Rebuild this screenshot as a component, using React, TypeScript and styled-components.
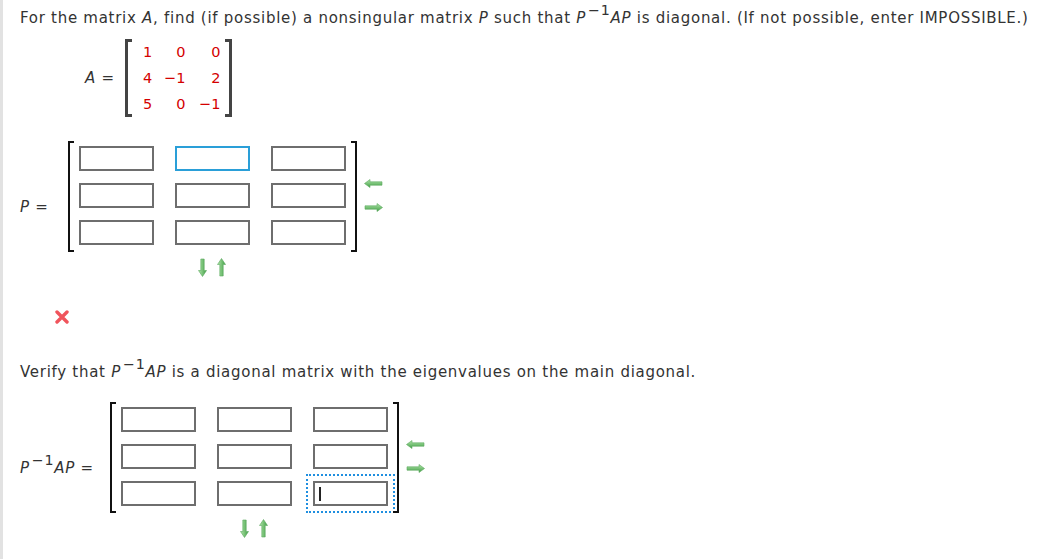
import React from 'react';
import styled, { createGlobalStyle } from 'styled-components';

const GlobalStyle = createGlobalStyle`
  html, body {
    margin: 0;
    padding: 0;
    background: #fff;
  }
`;

const Page = styled.div`
  box-sizing: border-box;
  min-height: 559px;
  border-left: 3px solid #e2e2e2;
  padding: 8px 0 0 17px;
  font-family: "DejaVu Sans", Verdana, sans-serif;
  font-size: 15px;
  letter-spacing: 0.72px;
  color: #333;
`;

const Para = styled.p<{ $top?: number }>`
  margin: ${p => p.$top ?? 0}px 0 0 0;
  line-height: 20px;
  white-space: nowrap;
`;

const Var = styled.i`
  font-style: italic;
`;

const Sup = styled.sup`
  font-size: 0.95em;
  vertical-align: 0.55em;
  line-height: 0;
  margin-left: 2px;
`;

const Row = styled.div<{ $indent?: number; $top?: number }>`
  display: flex;
  align-items: center;
  margin-left: ${p => p.$indent ?? 0}px;
  margin-top: ${p => p.$top ?? 0}px;
`;

const Label = styled.span<{ $width: number; $shift?: number }>`
  width: ${p => p.$width}px;
  flex: none;
  white-space: nowrap;
  position: relative;
  top: ${p => p.$shift ?? 0}px;
`;

/* given matrix A */
const GivenMatrix = styled.div`
  display: grid;
  grid-template-columns: 20px 23px 35px;
  grid-auto-rows: 26px;
  align-items: center;
  padding: 0 8px 0 15px;
  border-left: 3px solid #444;
  border-right: 3px solid #444;
  position: relative;
  font-size: 14.5px;
  letter-spacing: 0.5px;

  &::before,
  &::after {
    content: '';
    position: absolute;
    top: 0;
    bottom: 0;
    width: 4px;
    border-top: 3px solid #444;
    border-bottom: 3px solid #444;
  }
  &::before { left: 0; }
  &::after { right: 0; }
`;

const Entry = styled.span<{ $align?: string }>`
  color: #d40000;
  text-align: ${p => p.$align ?? 'right'};
`;

/* input matrices */
const Wrap = styled.div`
  display: flex;
  align-items: center;
`;

const Bracketed = styled.div`
  position: relative;
  padding: 5px 9px 7px 9px;
  border-left: 2px solid #111;
  border-right: 2px solid #111;

  &::before,
  &::after {
    content: '';
    position: absolute;
    top: 0;
    bottom: 0;
    width: 4px;
    border-top: 2px solid #111;
    border-bottom: 2px solid #111;
  }
  &::before { left: 0; }
  &::after { right: 0; }
`;

const Cells = styled.div`
  display: grid;
  grid-template-columns: repeat(3, 75px);
  column-gap: 21px;
  row-gap: 12px;
`;

const CellSlot = styled.div<{ $focus?: boolean }>`
  position: relative;
  width: 75px;
  height: 25px;

  ${p =>
    p.$focus &&
    `&::after {
      content: '';
      position: absolute;
      left: -7px;
      top: -7px;
      right: -7px;
      bottom: -7px;
      border: 2px dotted #1f8fe0;
    }`}
`;

const Cell = styled.div<{ $active?: boolean }>`
  box-sizing: border-box;
  width: 75px;
  height: 25px;
  border: 2px solid ${p => (p.$active ? '#2a9fd8' : '#6e6e6e')};
  background: #fff;
  position: relative;
`;

const Caret = styled.span`
  position: absolute;
  left: 4px;
  top: 4px;
  width: 2px;
  height: 14px;
  background: #222;
`;

const SideArrows = styled.div`
  display: flex;
  flex-direction: column;
  gap: 15px;
  margin-left: 7px;
  margin-top: -3px;
`;

const BottomArrows = styled.div<{ $left: number }>`
  display: flex;
  gap: 10px;
  margin: 6px 0 0 ${p => p.$left}px;
`;

const Block = styled.div`
  display: flex;
  flex-direction: column;
`;

const Feedback = styled.div`
  margin: 33px 0 0 35px;
  height: 14px;
`;

const Grad = () => (
  <defs>
    <linearGradient id="gh" x1="0" y1="0" x2="0" y2="1">
      <stop offset="0" stopColor="#b2e6aa" />
      <stop offset="1" stopColor="#3f9e45" />
    </linearGradient>
    <linearGradient id="gv" x1="0" y1="0" x2="1" y2="0">
      <stop offset="0" stopColor="#b2e6aa" />
      <stop offset="1" stopColor="#3f9e45" />
    </linearGradient>
  </defs>
);

const ArrowIcon = ({ dir }: { dir: 'left' | 'right' | 'up' | 'down' }) => {
  if (dir === 'left' || dir === 'right') {
    const d =
      dir === 'left'
        ? 'M0.5 4.5 L6 0.5 L6 2.8 L18 2.8 L18 6.2 L6 6.2 L6 8.5 Z'
        : 'M18.5 4.5 L13 0.5 L13 2.8 L1 2.8 L1 6.2 L13 6.2 L13 8.5 Z';
    return (
      <svg width="19" height="9" viewBox="0 0 19 9">
        <Grad />
        <path d={d} fill="url(#gh)" stroke="#5daa5f" strokeWidth="0.6" />
      </svg>
    );
  }
  const d =
    dir === 'down'
      ? 'M4.5 18.5 L0.5 12.5 L2.8 12.5 L2.8 1 L6.2 1 L6.2 12.5 L8.5 12.5 Z'
      : 'M4.5 0.5 L0.5 6.5 L2.8 6.5 L2.8 18 L6.2 18 L6.2 6.5 L8.5 6.5 Z';
  return (
    <svg width="9" height="19" viewBox="0 0 9 19">
      <Grad />
      <path d={d} fill="url(#gv)" stroke="#5daa5f" strokeWidth="0.6" />
    </svg>
  );
};

const CrossIcon = () => (
  <svg width="14" height="14" viewBox="0 0 14 14">
    <path d="M2 2 L12 12 M12 2 L2 12" stroke="#f0545c" strokeWidth="3.4" strokeLinecap="round" />
  </svg>
);

type Props = { active?: number; focus?: number };

const InputMatrix: React.FC<Props & { arrowsLeft: number }> = ({ active, focus, arrowsLeft }) => (
  <Block>
    <Wrap>
      <Bracketed>
        <Cells>
          {Array.from({ length: 9 }).map((_, i) => (
            <CellSlot key={i} $focus={focus === i}>
              <Cell $active={active === i}>{focus === i && <Caret />}</Cell>
            </CellSlot>
          ))}
        </Cells>
      </Bracketed>
      <SideArrows>
        <ArrowIcon dir="left" />
        <ArrowIcon dir="right" />
      </SideArrows>
    </Wrap>
    <BottomArrows $left={130}>
      <ArrowIcon dir="down" />
      <ArrowIcon dir="up" />
    </BottomArrows>
  </Block>
);

const A = [
  ['1', '0', '0'],
  ['4', '\u22121', '2'],
  ['5', '0', '\u22121'],
];

export default function App() {
  return (
    <>
      <GlobalStyle />
      <Page>
        <Para>
          For the matrix <Var>A</Var>, find (if possible) a nonsingular matrix <Var>P</Var> such that{' '}
          <Var>P</Var>
          <Sup>{'\u22121'}</Sup>
          <Var>AP</Var> is diagonal. (If not possible, enter IMPOSSIBLE.)
        </Para>

        <Row $indent={65} $top={11}>
          <Label $width={40}>
            <Var>A</Var> =
          </Label>
          <GivenMatrix>
            {A.flat().map((v, i) => (
              <Entry key={i} $align={i % 3 === 0 ? 'left' : 'right'}>
                {v}
              </Entry>
            ))}
          </GivenMatrix>
        </Row>

        <Row $top={24}>
          <Label $width={48} $shift={-2}>
            <Var>P</Var> =
          </Label>
          <InputMatrix active={1} arrowsLeft={130} />
        </Row>

        <Feedback>
          <CrossIcon />
        </Feedback>

        <Para $top={38}>
          Verify that <Var>P</Var>
          <Sup>{'\u22121'}</Sup>
          <Var>AP</Var> is a diagonal matrix with the eigenvalues on the main diagonal.
        </Para>

        <Row $top={20}>
          <Label $width={90} $shift={-2}>
            <Var>P</Var>
            <Sup>{'\u22121'}</Sup>
            <Var>AP</Var> =
          </Label>
          <InputMatrix focus={8} arrowsLeft={130} />
        </Row>
      </Page>
    </>
  );
}
